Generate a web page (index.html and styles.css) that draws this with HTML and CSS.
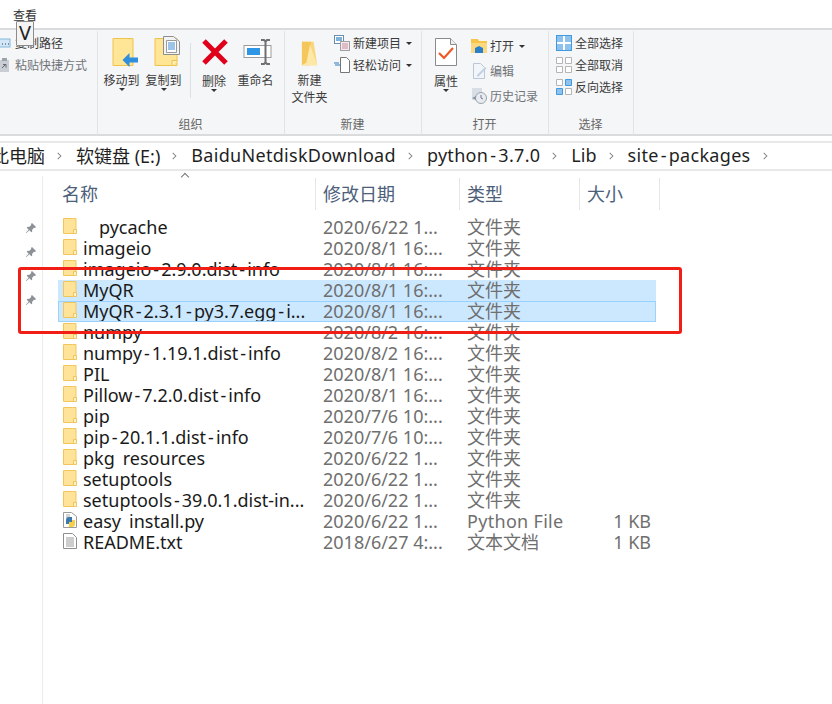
FILE: index.html
```html
<!DOCTYPE html>
<html lang="zh-CN">
<head>
<meta charset="utf-8">
<title>site-packages</title>
<link rel="stylesheet" href="styles.css">
</head>
<body>
<svg class="defs" width="0" height="0">
  <defs>
    <symbol id="folder" viewBox="0 0 14 16">
      <path d="M.5.5h9l3.500 0v15H.5z" fill="#ffe398" stroke="#f2c55c"/>
      <path d="M10.500 15.500v-4h3v4z" fill="#fff2c4" stroke="#f2c55c"/>
    </symbol>
    <symbol id="pin" viewBox="0 0 12 12">
      <path d="M7 1l4 4-1 1-1-.3L7 8l.3 1.500-1 .8-2-2-2.800 2.700-.5-.5L3.700 7.700l-2-2 .8-1L4 5 6.300 3l-.3-1z" fill="#8c9097"/>
    </symbol>
  </defs>
</svg>
<div class="page">
  <div class="tabs"><span class="tab">查看</span></div>
  <span class="keytip">V</span>

  <section class="ribbon">
    <div class="group g-clip">
      <div class="group-body clip-body">
        <div class="small-btn"><svg class="ic14" viewBox="0 0 14 14"><rect x="-4" y="3" width="16" height="8" fill="#d3e7f8" stroke="#86b7dd"/><path d="M0 8h2M4 8h1M7 8h1M10 8h1" stroke="#244" stroke-width="1"/></svg><span>复制路径</span></div>
        <div class="small-btn dim"><svg class="ic14" viewBox="0 0 14 14"><rect x="1" y="2" width="10" height="12" fill="#c9ced4"/><rect x="4" y="0" width="5" height="3" fill="#9ba3ab"/><path d="M4 10l3-3M5 6.500h3v3" stroke="#667" fill="none"/></svg><span>粘贴快捷方式</span></div>
      </div>
      <div class="group-label"></div>
    </div>

    <div class="group g-org">
      <div class="group-body org-body">
        <div class="big-btn w-move">
          <svg class="ic-big" viewBox="0 0 32 32"><path d="M7 2.500h20v27H7z" fill="#ffe596" stroke="#f0c34d"/><path d="M16.500 24l7-7v4.500h9v5h-9V31z" fill="#2f8fdc"/></svg>
          <span class="lbl">移动到</span><i class="caret"></i>
        </div>
        <div class="big-btn w-copy">
          <svg class="ic-big" viewBox="0 0 32 32"><path d="M7 2.500h22v27H7z" fill="#ffe596" stroke="#f0c34d"/><path d="M24 29.500v-5h5.500" fill="#fff1bf" stroke="#f0c34d"/><path d="M15.500.5h10l6 5v13h-16z" fill="#f4f4f4" stroke="#8e8e8e"/><path d="M18.500 4.500h10v12h-10z" fill="#fff" stroke="#9a9a9a"/><path d="M20 7h7M20 9h7M20 11h7M20 13h7" stroke="#3a8ad5"/></svg>
          <span class="lbl">复制到</span><i class="caret"></i>
        </div>
        <span class="mini-sep"></span>
        <div class="big-btn w-del">
          <svg class="ic-big" viewBox="0 0 32 32"><path d="M6 5l22 22M28 5L6 27" stroke="#e0001b" stroke-width="5"/></svg>
          <span class="lbl">删除</span><i class="caret"></i>
        </div>
        <div class="big-btn w-ren">
          <svg class="ic-big" viewBox="0 0 32 32"><rect x="4" y="9.500" width="27" height="12" fill="#fff" stroke="#9b9b9b"/><rect x="7" y="12" width="13" height="7" fill="#2f96e6"/><path d="M21 4h3l1.500 1.500L27 4h3M25.500 5v22M21 28h3l1.500-1.500L27 28h3" stroke="#6f6f6f" stroke-width="2" fill="none"/></svg>
          <span class="lbl">重命名</span>
        </div>
      </div>
      <div class="group-label">组织</div>
    </div>

    <div class="group g-new">
      <div class="group-body new-body">
        <div class="big-btn w-newf">
          <svg class="ic-newf" viewBox="0 0 20 30"><path d="M1 2h13l4 26H4z" fill="#fbd67c"/><path d="M1 2h10l-1 26H1z" fill="#f5c65b"/><path d="M10 5l8 23H1l5-3z" fill="#fde8a8"/></svg>
          <span class="lbl two">新建<br>文件夹</span>
        </div>
        <div class="col-small">
          <div class="small-btn"><svg class="ic16" viewBox="0 0 16 16"><rect x=".5" y=".5" width="9" height="8" fill="#fff" stroke="#6d8ea8"/><rect x="2" y="2" width="6" height="4" fill="#7fb2d8"/><rect x="6.500" y="6.500" width="9" height="9" fill="#f3e9ee" stroke="#a0a0a0"/><path d="M8 9h6M8 11h6M8 13h6" stroke="#c8909f"/></svg><span>新建项目</span><i class="caret side"></i></div>
          <div class="small-btn"><svg class="ic16" viewBox="0 0 16 16"><path d="M6.500.5h6l3 3v12h-9z" fill="#fff" stroke="#777"/><path d="M0 6h5M1 8h5" stroke="#2b7bc4"/></svg><span>轻松访问</span><i class="caret side"></i></div>
        </div>
      </div>
      <div class="group-label">新建</div>
    </div>

    <div class="group g-open">
      <div class="group-body open-body">
        <div class="big-btn w-prop">
          <svg class="ic-prop" viewBox="0 0 22 28"><path d="M.5.5h15l6 6v21H.5z" fill="#fff" stroke="#8a8a8a"/><path d="M15.500.5v6h6" fill="#eee" stroke="#8a8a8a"/><path d="M4 15l5 5 9-10" fill="none" stroke="#ee5a24" stroke-width="2.200"/></svg>
          <span class="lbl">属性</span><i class="caret"></i>
        </div>
        <div class="col-small tight">
          <div class="small-btn"><svg class="ic16" viewBox="0 0 16 16"><path d="M0 1h7l1 2h8v12H0z" fill="#f7c648"/><path d="M0 5h16v10H0z" fill="#fbd980"/><path d="M4 15v-5l4-2 4 2v5z" fill="#2b7fc9"/></svg><span>打开</span><i class="caret side"></i></div>
          <div class="small-btn dim"><svg class="ic16" viewBox="0 0 16 16"><path d="M2.500.5h7l4 4v11h-11z" fill="#f2f5f9" stroke="#bcc6d4"/><path d="M6 12l8-8 1.500 1.500-8 8H6z" fill="#c2d2e4"/></svg><span>编辑</span></div>
          <div class="small-btn dim"><svg class="ic16" viewBox="0 0 16 16"><rect x="1" y="0" width="10" height="12" fill="#d8dee6"/><circle cx="10" cy="10" r="5.500" fill="#e8ecf0" stroke="#9aa4ae"/><path d="M10 7v3l2 1" stroke="#778" fill="none"/><path d="M1 10l4-2v4z" fill="#8a97a5"/></svg><span>历史记录</span></div>
        </div>
      </div>
      <div class="group-label">打开</div>
    </div>

    <div class="group g-sel">
      <div class="group-body">
        <div class="col-small sel">
          <div class="small-btn"><svg class="ic16" viewBox="0 0 16 16"><rect x=".5" y=".5" width="15" height="15" fill="#fff" stroke="#3f9ae0"/><path d="M1 1h6v6H1zM9 1h6v6H9zM1 9h6v6H1zM9 9h6v6H9z" fill="#8ec1ee"/></svg><span>全部选择</span></div>
          <div class="small-btn"><svg class="ic16" viewBox="0 0 16 16"><path d="M.5.5h6v6h-6zM9.500.5h6v6h-6zM.5 9.500h6v6h-6zM9.500 9.500h6v6h-6z" fill="#fff" stroke="#b5b5b5"/></svg><span>全部取消</span></div>
          <div class="small-btn"><svg class="ic16" viewBox="0 0 16 16"><path d="M.5.5h6v6h-6zM9.500 9.500h6v6h-6z" fill="#fff" stroke="#b5b5b5"/><path d="M9.500.5h6v6h-6zM.5 9.500h6v6h-6z" fill="#8ec1ee" stroke="#3f9ae0"/></svg><span>反向选择</span></div>
        </div>
      </div>
      <div class="group-label">选择</div>
    </div>
  </section>

  <nav class="address">
    <span>此电脑</span><i class="chev"></i>
    <span>软键盘 (E:)</span><i class="chev"></i>
    <span class="wide">BaiduNetdiskDownload</span><i class="chev"></i>
    <span class="wide">python<b class="hy">-</b>3.7.0</span><i class="chev"></i>
    <span>Lib</span><i class="chev"></i>
    <span class="wide">site<b class="hy">-</b>packages</span><i class="chev"></i>
  </nav>

  <main class="explorer">
    <aside class="quick">
      <svg class="pin"><use href="#pin"/></svg>
      <svg class="pin"><use href="#pin"/></svg>
      <svg class="pin"><use href="#pin"/></svg>
      <svg class="pin"><use href="#pin"/></svg>
    </aside>
    <div class="files">
      <div class="head">
        <span class="h h-name">名称<i class="sort"></i></span>
        <span class="h">修改日期</span>
        <span class="h">类型</span>
        <span class="h">大小</span>
      </div>
      <div class="row"><svg class="fi"><use href="#folder"/></svg><span class="n"><b class="us">__</b>pycache<b class="us">__</b></span><span class="m">2020/6/22 1...</span><span class="m">文件夹</span><span class="m s"></span></div>
      <div class="row"><svg class="fi"><use href="#folder"/></svg><span class="n">imageio</span><span class="m">2020/8/1 16:...</span><span class="m">文件夹</span><span class="m s"></span></div>
      <div class="row"><svg class="fi"><use href="#folder"/></svg><span class="n">imageio<b class="hy">-</b>2.9.0.dist<b class="hy">-</b>info</span><span class="m">2020/8/1 16:...</span><span class="m">文件夹</span><span class="m s"></span></div>
      <div class="row sel-row"><svg class="fi"><use href="#folder"/></svg><span class="n">MyQR</span><span class="m">2020/8/1 16:...</span><span class="m">文件夹</span><span class="m s"></span></div>
      <div class="row sel-row focus"><svg class="fi"><use href="#folder"/></svg><span class="n">MyQR<b class="hy">-</b>2.3.1<b class="hy">-</b>py3.7.egg<b class="hy">-</b>i...</span><span class="m">2020/8/1 16:...</span><span class="m">文件夹</span><span class="m s"></span></div>
      <div class="row"><svg class="fi"><use href="#folder"/></svg><span class="n">numpy</span><span class="m">2020/8/2 16:...</span><span class="m">文件夹</span><span class="m s"></span></div>
      <div class="row"><svg class="fi"><use href="#folder"/></svg><span class="n">numpy<b class="hy">-</b>1.19.1.dist<b class="hy">-</b>info</span><span class="m">2020/8/2 16:...</span><span class="m">文件夹</span><span class="m s"></span></div>
      <div class="row"><svg class="fi"><use href="#folder"/></svg><span class="n">PIL</span><span class="m">2020/8/1 16:...</span><span class="m">文件夹</span><span class="m s"></span></div>
      <div class="row"><svg class="fi"><use href="#folder"/></svg><span class="n">Pillow<b class="hy">-</b>7.2.0.dist<b class="hy">-</b>info</span><span class="m">2020/8/1 16:...</span><span class="m">文件夹</span><span class="m s"></span></div>
      <div class="row"><svg class="fi"><use href="#folder"/></svg><span class="n">pip</span><span class="m">2020/7/6 10:...</span><span class="m">文件夹</span><span class="m s"></span></div>
      <div class="row"><svg class="fi"><use href="#folder"/></svg><span class="n">pip<b class="hy">-</b>20.1.1.dist<b class="hy">-</b>info</span><span class="m">2020/7/6 10:...</span><span class="m">文件夹</span><span class="m s"></span></div>
      <div class="row"><svg class="fi"><use href="#folder"/></svg><span class="n">pkg<b class="us">_</b>resources</span><span class="m">2020/6/22 1...</span><span class="m">文件夹</span><span class="m s"></span></div>
      <div class="row"><svg class="fi"><use href="#folder"/></svg><span class="n">setuptools</span><span class="m">2020/6/22 1...</span><span class="m">文件夹</span><span class="m s"></span></div>
      <div class="row"><svg class="fi"><use href="#folder"/></svg><span class="n">setuptools<b class="hy">-</b>39.0.1.dist-in...</span><span class="m">2020/6/22 1...</span><span class="m">文件夹</span><span class="m s"></span></div>
      <div class="row"><svg class="fi" viewBox="0 0 14 16"><path d="M.5.5h8l5 4v11H.5z" fill="#fff" stroke="#9a9a9a"/><path d="M3 3h4M3 5h4" stroke="#aaa"/><path d="M3 8a3 3 0 0 1 3-3h3v5H6v2H3z" fill="#3a78ad"/><path d="M6 10h3V8h3v4a3 3 0 0 1-3 3H6z" fill="#f6cf46"/></svg><span class="n">easy<b class="us">_</b>install.py</span><span class="m">2020/6/22 1...</span><span class="m wide-m">Python File</span><span class="m s">1 KB</span></div>
      <div class="row"><svg class="fi" viewBox="0 0 14 16"><path d="M.5.5h9l4 4v11H.5z" fill="#fff" stroke="#8e8e8e"/><path d="M3 5h8M3 7h8M3 9h8M3 11h8M3 13h8" stroke="#9b9b9b"/></svg><span class="n">README.txt</span><span class="m">2018/6/27 4:...</span><span class="m">文本文档</span><span class="m s">1 KB</span></div>
    </div>
  </main>

  <div class="mark"></div>
</div>
</body>
</html>
```

FILE: styles.css
```css
* { box-sizing: border-box; }
html, body { margin: 0; padding: 0; background: #fff; }
.defs { position: absolute; }
.page {
  position: relative;
  width: 832px;
  height: 704px;
  overflow: hidden;
  font-family: "Noto Sans", "Noto Sans CJK SC", sans-serif;
  color: #1a1a1a;
}

/* tabs */
.tabs { height: 28px; padding: 7px 0 0 13px; font-size: 12px; line-height: 16px; }
.tab { font-family: "Noto Sans CJK SC", sans-serif; color: #333; }
.keytip {
  position: absolute; left: 16px; top: 21px; width: 18px; height: 25px;
  background: #f4f4f4; border: 1px solid #8c8c8c; border-radius: 1px;
  font-size: 20px; line-height: 21px; text-align: center; color: #222;
}

/* ribbon */
.ribbon {
  display: flex;
  height: 108px;
  background: #f5f6f7;
  border-top: 2px solid #dadbdc;
  border-bottom: 2px solid #dadbdc;
  font-family: "Noto Sans CJK SC", sans-serif;
  font-size: 12px;
  color: #3b3b3b;
}
.group {
  display: flex;
  flex-direction: column;
  height: 104px;
  margin-top: 1px;
  border-right: 1px solid #e1e3e6;
}
.group-body { display: flex; height: 84px; }
.group-label { height: 18px; line-height: 18px; padding-right: 1px; text-align: center; color: #666; }
.g-clip { width: 98px; }
.clip-body { flex-direction: column; padding: 4px 0 0 0; gap: 6px; }
.g-org { width: 187px; }
.org-body { padding: 5px 0 0 4px; }
.g-new { width: 137px; }
.new-body { padding: 6px 0 0 6px; }
.g-open { width: 127px; }
.open-body { padding: 6px 0 0 6px; }
.g-sel { width: 85px; }

.big-btn { display: flex; flex: none; flex-direction: column; align-items: center; }
.w-move { width: 39px; }
.w-copy { width: 45px; }
.w-del { width: 40px; margin-left: 3px; }
.w-ren { width: 43px; }
.w-newf { width: 37px; }
.w-prop { width: 36px; }
.ic-big { width: 32px; height: 32px; flex: none; }
.ic-newf { width: 18px; height: 27px; flex: none; margin-top: 3px; }
.ic-prop { width: 22px; height: 28px; flex: none; margin-top: 1px; }
.lbl { line-height: 16px; margin-top: 4px; white-space: nowrap; }
.lbl.two { line-height: 17px; text-align: center; margin-top: 4px; }
.w-del .lbl { margin-top: 5px; }
.w-prop .lbl { margin-top: 7px; }
.caret {
  display: block; width: 0; height: 0;
  border-left: 3px solid transparent; border-right: 3px solid transparent;
  border-top: 3px solid #333;
}
.caret.side { margin-left: 2px; }
.mini-sep { flex: none; width: 1px; height: 55px; margin: 7px 0 0 4px; background: #dcdfe3; }

.small-btn { display: flex; align-items: center; gap: 3px; height: 16px; white-space: nowrap; }
.small-btn span { line-height: 16px; }
.dim { color: #6f7377; }
.ic14 { width: 14px; height: 14px; flex: none; margin-left: -2px; }
.ic16 { width: 16px; height: 16px; flex: none; }
.col-small { display: flex; flex-direction: column; gap: 6px; margin-top: -2px; padding-left: 6px; }
.col-small.tight { gap: 9px; margin-top: 1px; padding-left: 7px; }
.col-small.sel { margin-top: 4px; padding-left: 7px; }

/* address bar */
.address {
  display: flex;
  align-items: center;
  height: 30px;
  margin-top: 5px;
  margin-left: -9px;
  padding-bottom: 3px;
  border-top: 2px solid #e8e8e8;
  border-bottom: 2px solid #e8e8e8;
  width: 841px;
  font-size: 18px;
  color: #1f1f1f;
  white-space: nowrap;
}
.wide { letter-spacing: .3px; }
.chev {
  flex: none;
  width: 6px; height: 6px; margin: 3px 15px 0 10px;
  border-top: 1.500px solid #777; border-right: 1.500px solid #777;
  transform: rotate(45deg) scale(.8);
}
.hy { font-weight: 400; padding: 0 2px; }
.us { font-weight: 400; color: transparent; }

/* explorer */
.explorer { display: flex; height: 533px; }
.quick {
  width: 43px;
  border-right: 1px solid #ececec;
  display: flex;
  flex-direction: column;
  align-items: flex-end;
  gap: 12px;
  padding: 46px 5px 0 0;
  margin-top: 5px;
}
.pin { width: 12px; height: 12px; flex: none; }
.files { width: 617px; padding-left: 15px; }
.head {
  display: grid;
  grid-template-columns: 258px 144px 120px 80px;
  height: 32px;
  margin-top: 7px;
  margin-bottom: 7px;
}
.h {
  position: relative;
  border-right: 1px solid #e5e5e5;
  padding-left: 7px;
  font-size: 18px;
  line-height: 30px;
  color: #4c607a;
  font-family: "Noto Sans CJK SC", sans-serif;
}
.h-name { padding-left: 4px; }
.sort {
  position: absolute; left: 124px; top: -4px; width: 6px; height: 6px;
  border-top: 1px solid #777; border-left: 1px solid #777;
  transform: rotate(45deg);
}
.row {
  display: grid;
  grid-template-columns: 26px 232px 144px 120px 71px;
  align-items: center;
  height: 21px;
  width: 598px;
  font-size: 18px;
  line-height: 21px;
  white-space: nowrap;
}
.fi { width: 14px; height: 16px; margin: -3px 0 0 5px; }
.n { color: #1a1a1a; margin-left: -1px; }
.m { padding-left: 7px; color: #6f6f6f; }
.wide-m { letter-spacing: .3px; }
.s { padding-left: 0; text-align: right; }
.sel-row { background: #cce8ff; }
.focus { outline: 1px solid #99d1ff; outline-offset: -1px; }

/* red annotation */
.mark {
  position: absolute;
  left: 18px; top: 267px; width: 664px; height: 67px;
  border: 3px solid #f01e14;
  border-radius: 3px;
}
```
